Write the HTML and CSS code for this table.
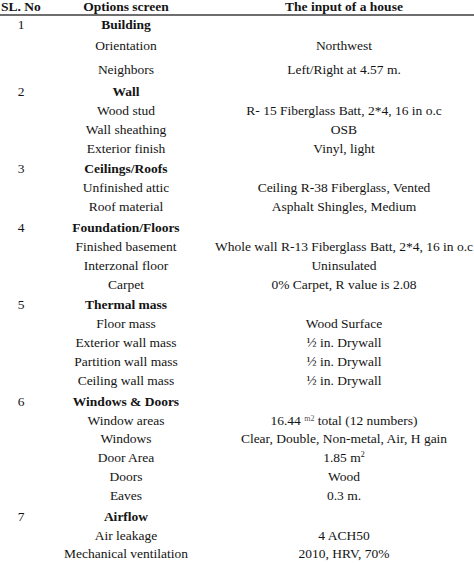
FILE: index.html
```html
<!DOCTYPE html>
<html>
<head>
<meta charset="utf-8">
<link rel="stylesheet" href="styles.css">
</head>
<body>
<div class="table">
  <div class="row head">
    <div class="c1">SL. No</div><div class="c2">Options screen</div><div class="c3">The input of a house</div>
  </div>
  <div class="row cat first"><div class="c1">1</div><div class="c2 b">Building</div><div class="c3"></div></div>
  <div class="row tall"><div class="c1"></div><div class="c2">Orientation</div><div class="c3">Northwest</div></div>
  <div class="row tall"><div class="c1"></div><div class="c2">Neighbors</div><div class="c3">Left/Right at 4.57 m.</div></div>

  <div class="row cat"><div class="c1">2</div><div class="c2 b">Wall</div><div class="c3"></div></div>
  <div class="row"><div class="c1"></div><div class="c2">Wood stud</div><div class="c3">R- 15 Fiberglass Batt, 2*4, 16 in o.c</div></div>
  <div class="row"><div class="c1"></div><div class="c2">Wall sheathing</div><div class="c3">OSB</div></div>
  <div class="row"><div class="c1"></div><div class="c2">Exterior finish</div><div class="c3">Vinyl, light</div></div>

  <div class="row cat"><div class="c1">3</div><div class="c2 b">Ceilings/Roofs</div><div class="c3"></div></div>
  <div class="row"><div class="c1"></div><div class="c2">Unfinished attic</div><div class="c3">Ceiling R-38 Fiberglass, Vented</div></div>
  <div class="row"><div class="c1"></div><div class="c2">Roof material</div><div class="c3">Asphalt Shingles, Medium</div></div>

  <div class="row cat"><div class="c1">4</div><div class="c2 b">Foundation/Floors</div><div class="c3"></div></div>
  <div class="row"><div class="c1"></div><div class="c2">Finished basement</div><div class="c3">Whole wall R-13 Fiberglass Batt, 2*4, 16 in o.c</div></div>
  <div class="row"><div class="c1"></div><div class="c2">Interzonal floor</div><div class="c3">Uninsulated</div></div>
  <div class="row"><div class="c1"></div><div class="c2">Carpet</div><div class="c3">0% Carpet, R value is 2.08</div></div>

  <div class="row cat"><div class="c1">5</div><div class="c2 b">Thermal mass</div><div class="c3"></div></div>
  <div class="row"><div class="c1"></div><div class="c2">Floor mass</div><div class="c3">Wood Surface</div></div>
  <div class="row"><div class="c1"></div><div class="c2">Exterior wall mass</div><div class="c3">½ in. Drywall</div></div>
  <div class="row"><div class="c1"></div><div class="c2">Partition wall mass</div><div class="c3">½ in. Drywall</div></div>
  <div class="row"><div class="c1"></div><div class="c2">Ceiling wall mass</div><div class="c3">½ in. Drywall</div></div>

  <div class="row cat"><div class="c1">6</div><div class="c2 b">Windows &amp; Doors</div><div class="c3"></div></div>
  <div class="row"><div class="c1"></div><div class="c2">Window areas</div><div class="c3">16.44 <sup class="sm">m2</sup> total (12 numbers)</div></div>
  <div class="row"><div class="c1"></div><div class="c2">Windows</div><div class="c3">Clear, Double, Non-metal, Air, H gain</div></div>
  <div class="row"><div class="c1"></div><div class="c2">Door Area</div><div class="c3">1.85 m<sup class="sq">2</sup></div></div>
  <div class="row"><div class="c1"></div><div class="c2">Doors</div><div class="c3">Wood</div></div>
  <div class="row"><div class="c1"></div><div class="c2">Eaves</div><div class="c3">0.3 m.</div></div>

  <div class="row cat"><div class="c1">7</div><div class="c2 b">Airflow</div><div class="c3"></div></div>
  <div class="row"><div class="c1"></div><div class="c2">Air leakage</div><div class="c3">4 ACH50</div></div>
  <div class="row"><div class="c1"></div><div class="c2">Mechanical ventilation</div><div class="c3">2010, HRV, 70%</div></div>
</div>
</body>
</html>
```

FILE: styles.css
```css
html, body {
  margin: 0;
  padding: 0;
  background: #ffffff;
}
body {
  width: 474px;
  height: 563px;
  overflow: hidden;
  font-family: "Liberation Serif", "Times New Roman", serif;
  font-size: 13.5px;
  color: #141414;
}
.table {
  width: 478px;
}
.row {
  display: grid;
  grid-template-columns: 42px 168px 268px;
  height: 18.8px;
  line-height: 18.8px;
  text-align: center;
  white-space: nowrap;
}
.head {
  height: 14px;
  line-height: 14px;
  font-weight: bold;
  border-bottom: 2px solid #6e6e6e;
}
.cat {
  height: 21px;
  line-height: 21px;
}
.cat.first {
  height: 18px;
  line-height: 18px;
}
.tall {
  height: 23.5px;
  line-height: 23.5px;
}
.b {
  font-weight: bold;
}
.sm {
  font-size: 8px;
  color: #555555;
  vertical-align: 4px;
  line-height: 0;
}
.sq {
  font-size: 8px;
  vertical-align: 5px;
  line-height: 0;
}
```
